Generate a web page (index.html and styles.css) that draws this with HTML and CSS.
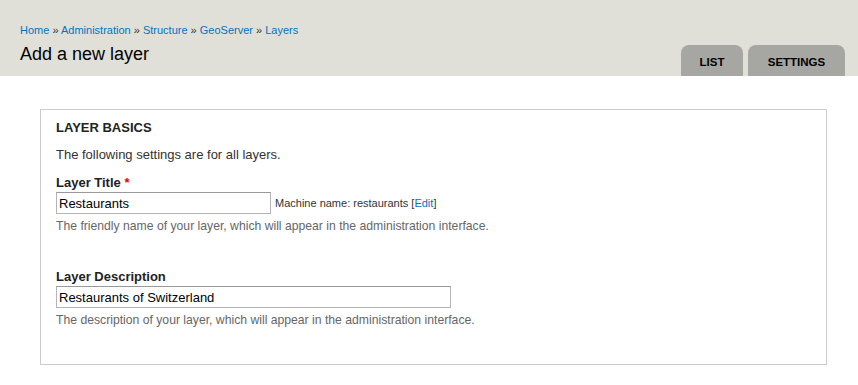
FILE: index.html
```html
<!DOCTYPE html>
<html>
<head>
<meta charset="utf-8">
<link rel="stylesheet" href="styles.css">
</head>
<body>
<div class="branding">
  <div class="brand-left">
    <div class="breadcrumb"><a href="#">Home</a> » <a href="#">Administration</a> » <a href="#">Structure</a> » <a href="#">GeoServer</a> » <a href="#">Layers</a></div>
    <h1 class="page-title">Add a new layer</h1>
  </div>
  <ul class="tabs">
    <li class="tab">LIST</li>
    <li class="tab">SETTINGS</li>
  </ul>
</div>
<div class="page">
  <fieldset class="fieldset">
    <div class="legend">LAYER BASICS</div>
    <div class="fs-desc">The following settings are for all layers.</div>
    <div class="form-item">
      <label class="label">Layer Title <span class="req">*</span></label>
      <div class="inline">
        <input class="text text-short" type="text" value="Restaurants">
        <span class="machine">Machine name: restaurants [<a href="#">Edit</a>]</span>
      </div>
      <div class="help">The friendly name of your layer, which will appear in the administration interface.</div>
    </div>
    <div class="form-item second">
      <label class="label">Layer Description</label>
      <input class="text text-long" type="text" value="Restaurants of Switzerland">
      <div class="help">The description of your layer, which will appear in the administration interface.</div>
    </div>
  </fieldset>
</div>
</body>
</html>
```
FILE: styles.css
```css
html, body {
  margin: 0;
  padding: 0;
  background: #fff;
  font-family: "Liberation Sans", Arial, sans-serif;
  color: #333;
}
a { color: #0074bd; text-decoration: none; }
.branding {
  background: #e0e0d8;
  height: 76px;
  display: flex;
  justify-content: space-between;
  align-items: flex-end;
  padding: 0 13px 0 20px;
  box-sizing: border-box;
}
.brand-left {
  align-self: flex-start;
  padding-top: 23px;
}
.breadcrumb {
  font-size: 11px;
  line-height: 14px;
  color: #333;
}
.page-title {
  margin: 6px 0 0;
  font-size: 18px;
  font-weight: normal;
  color: #000;
  line-height: 22px;
}
.tabs {
  list-style: none;
  margin: 0;
  padding: 0;
  display: flex;
  gap: 5px;
}
.tab {
  background: #a6a7a2;
  height: 31px;
  line-height: 34px;
  border-radius: 8px 8px 0 0;
  font-size: 11.5px;
  font-weight: bold;
  color: #000;
  text-align: center;
}
.tab:first-child { width: 62px; }
.tab:last-child { width: 97px; }
.page {
  padding: 33px 31px 0 40px;
}
.fieldset {
  margin: 0;
  border: 1px solid #ccc;
  padding: 10px 15px 0;
  height: 256px;
  box-sizing: border-box;
  min-width: 0;
}
.legend {
  font-size: 13px;
  font-weight: bold;
  color: #222;
  line-height: 16px;
}
.fs-desc {
  font-size: 13px;
  margin-top: 11px;
  line-height: 16px;
}
.form-item {
  margin-top: 12px;
}
.form-item.second { margin-top: 36px; }
.label {
  display: block;
  font-size: 13px;
  font-weight: bold;
  color: #222;
  line-height: 16px;
  margin-bottom: 1px;
}
.req { color: #e00; }
.inline {
  display: flex;
  align-items: center;
  gap: 4px;
}
.text {
  display: block;
  box-sizing: border-box;
  height: 22px;
  border: 1px solid #b4b4b4;
  border-top-color: #999;
  padding: 2px 2px;
  font-family: "Liberation Sans", Arial, sans-serif;
  font-size: 13px;
  color: #000;
  margin: 0;
}
.text-short { width: 215px; }
.text-long { width: 395px; }
.machine {
  font-size: 11px;
  color: #333;
}
.help {
  font-size: 12.2px;
  color: #666;
  margin-top: 5px;
  line-height: 14px;
}
```
